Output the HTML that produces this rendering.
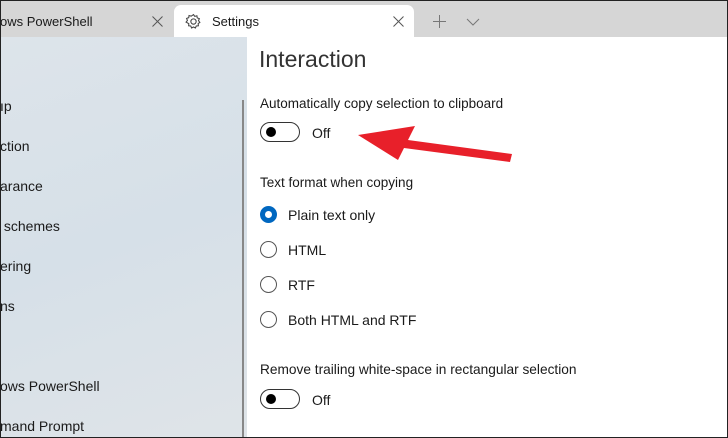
<!DOCTYPE html>
<html><head><style>
body{margin:0;width:728px;height:438px;overflow:hidden;font-family:"Liberation Sans",sans-serif;position:relative;background:#fff}
.a{position:absolute;white-space:nowrap}
.t{font-size:14px;color:#1a1a1a}
.radio{position:absolute;width:17px;height:17px;border:1.3px solid #555;border-radius:50%;box-sizing:border-box;left:260px}
.tog{position:absolute;left:260px;width:40px;height:20px;border:1.3px solid #333;border-radius:10px;box-sizing:border-box}
.tog:after{content:"";position:absolute;left:5px;top:4px;width:10px;height:10px;border-radius:50%;background:#000}
</style></head><body>
<div class="a" style="left:0;top:0;width:728px;height:37px;background:#d6d6d6"></div>
<div class="a t" style="left:0;top:14px;font-size:13px">ows PowerShell</div>
<svg class="a" style="left:152px;top:16px" width="11" height="11"><path d="M.5 .5l10 10M10.5 .5l-10 10" stroke="#555" stroke-width="1"/></svg>
<div class="a" style="left:174px;top:5px;width:240px;height:33px;background:#fff;border-radius:7px 7px 0 0"></div>
<svg class="a" style="left:185px;top:13px" width="17" height="17" viewBox="0 0 16 16"><circle cx="8" cy="8" r="2.5" fill="none" stroke="#444" stroke-width="1"/><path d="M8 1.5l1.2 1.7 2-.6.3 2 2 .7-.8 1.9 1.3 1.6-1.6 1.2.2 2-2 .2-.8 1.9-1.8-.9-1.8.9-.8-1.9-2-.2.2-2L1 8.6l1.3-1.6-.8-1.9 2-.7.3-2 2 .6z" fill="none" stroke="#444" stroke-width="1"/></svg>
<div class="a t" style="left:212px;top:14px;font-size:13px">Settings</div>
<svg class="a" style="left:393px;top:16px" width="11" height="11"><path d="M.5 .5l10 10M10.5 .5l-10 10" stroke="#555" stroke-width="1"/></svg>
<svg class="a" style="left:433px;top:15px" width="13" height="13"><path d="M6.5 0v13M0 6.5h13" stroke="#777" stroke-width="1"/></svg>
<svg class="a" style="left:466px;top:18px" width="14" height="8"><path d="M1 1l6 6 6-6" fill="none" stroke="#777" stroke-width="1"/></svg>
<div class="a" style="left:0;top:37px;width:247px;height:401px;background:linear-gradient(160deg,#dde4ea,#d6e0e8 50%,#dfe4e8)"></div>
<div class="a" style="left:242px;top:100px;width:2px;height:338px;background:#888"></div>
<div class="a t" style="left:0;top:98px">ıp</div>
<div class="a t" style="left:0;top:138px">ction</div>
<div class="a t" style="left:0;top:178px">arance</div>
<div class="a t" style="left:0;top:218px">&nbsp;schemes</div>
<div class="a t" style="left:0;top:258px">ering</div>
<div class="a t" style="left:0;top:298px">ns</div>
<div class="a t" style="left:0;top:378px">ows PowerShell</div>
<div class="a t" style="left:0;top:418px">mand Prompt</div>
<div class="a" style="left:259px;top:46px;font-size:23px;color:#333">Interaction</div>
<div class="a t" style="left:260px;top:96px;font-size:13.5px">Automatically copy selection to clipboard</div>
<div class="tog" style="top:122px"></div>
<div class="a t" style="left:312px;top:125px">Off</div>
<div class="a t" style="left:260px;top:175px;font-size:13.5px">Text format when copying</div>
<div class="radio" style="top:206px;border:5px solid #0067c0"></div>
<div class="a t" style="left:288px;top:207px">Plain text only</div>
<div class="radio" style="top:241px"></div>
<div class="a t" style="left:288px;top:242px">HTML</div>
<div class="radio" style="top:276px"></div>
<div class="a t" style="left:288px;top:277px">RTF</div>
<div class="radio" style="top:311px"></div>
<div class="a t" style="left:288px;top:312px">Both HTML and RTF</div>
<div class="a t" style="left:260px;top:362px;font-size:13.7px">Remove trailing white-space in rectangular selection</div>
<div class="tog" style="top:389px"></div>
<div class="a t" style="left:312px;top:392px">Off</div>
<svg class="a" style="left:0;top:0" width="728" height="438"><path d="M358 135L415 126L408 140L512 154L510 162L404 148L398 160Z" fill="#e8202a"/></svg>
<div class="a" style="left:0;top:0;width:728px;height:438px;border:1.5px solid #222;box-sizing:border-box"></div>
</body></html>
